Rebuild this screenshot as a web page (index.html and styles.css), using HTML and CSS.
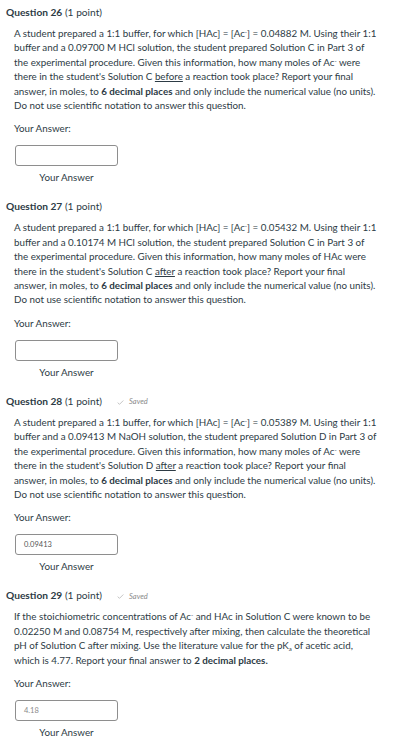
FILE: index.html
```html
<!DOCTYPE html>
<html>
<head>
<meta charset="utf-8">
<link rel="stylesheet" href="styles.css">
</head>
<body>
<div class="page">
  <section class="question">
    <div class="q-title"><b>Question 26</b> <span class="pts">(1 point)</span></div>
    <p class="q-body">A student prepared a 1:1 buffer, for which [HAc] = [Ac<sup>-</sup>] = 0.04882 M. Using their 1:1<br>buffer and a 0.09700 M HCl solution, the student prepared Solution C in Part 3 of<br>the experimental procedure. Given this information, how many moles of Ac<sup>-</sup> were<br>there in the student's Solution C <u>before</u> a reaction took place? Report your final<br>answer, in moles, to <b>6 decimal places</b> and only include the numerical value (no units).<br>Do not use scientific notation to answer this question.</p>
    <div class="answer-label">Your Answer:</div>
    <div class="answer">
      <div class="input"></div>
      <div class="input-caption">Your Answer</div>
    </div>
  </section>
  <section class="question">
    <div class="q-title"><b>Question 27</b> <span class="pts">(1 point)</span></div>
    <p class="q-body">A student prepared a 1:1 buffer, for which [HAc] = [Ac<sup>-</sup>] = 0.05432 M. Using their 1:1<br>buffer and a 0.10174 M HCl solution, the student prepared Solution C in Part 3 of<br>the experimental procedure. Given this information, how many moles of HAc were<br>there in the student's Solution C <u>after</u> a reaction took place? Report your final<br>answer, in moles, to <b>6 decimal places</b> and only include the numerical value (no units).<br>Do not use scientific notation to answer this question.</p>
    <div class="answer-label">Your Answer:</div>
    <div class="answer">
      <div class="input"></div>
      <div class="input-caption">Your Answer</div>
    </div>
  </section>
  <section class="question">
    <div class="q-title"><b>Question 28</b> <span class="pts">(1 point)</span><span class="saved"><svg class="check" viewBox="0 0 8 6" width="7" height="5"><path d="M0.6 3.2 L2.8 5.2 L7.4 0.6" fill="none" stroke="#b9b9b9" stroke-width="1"/></svg><i>Saved</i></span></div>
    <p class="q-body">A student prepared a 1:1 buffer, for which [HAc] = [Ac<sup>-</sup>] = 0.05389 M. Using their 1:1<br>buffer and a 0.09413 M NaOH solution, the student prepared Solution D in Part 3 of<br>the experimental procedure. Given this information, how many moles of Ac<sup>-</sup> were<br>there in the student's Solution D <u>after</u> a reaction took place? Report your final<br>answer, in moles, to <b>6 decimal places</b> and only include the numerical value (no units).<br>Do not use scientific notation to answer this question.</p>
    <div class="answer-label">Your Answer:</div>
    <div class="answer">
      <div class="input"><span class="value">0.09413</span></div>
      <div class="input-caption">Your Answer</div>
    </div>
  </section>
  <section class="question">
    <div class="q-title"><b>Question 29</b> <span class="pts">(1 point)</span><span class="saved"><svg class="check" viewBox="0 0 8 6" width="7" height="5"><path d="M0.6 3.2 L2.8 5.2 L7.4 0.6" fill="none" stroke="#b9b9b9" stroke-width="1"/></svg><i>Saved</i></span></div>
    <p class="q-body">If the stoichiometric concentrations of Ac<sup>-</sup> and HAc in Solution C were known to be<br>0.02250 M and 0.08754 M, respectively after mixing, then calculate the theoretical<br>pH of Solution C after mixing. Use the literature value for the pK<sub>a</sub> of acetic acid,<br>which is 4.77. Report your final answer to <b>2 decimal places.</b></p>
    <div class="answer-label">Your Answer:</div>
    <div class="answer">
      <div class="input"><span class="value light">4.18</span></div>
      <div class="input-caption">Your Answer</div>
    </div>
  </section>
</div>
</body>
</html>
```
FILE: styles.css
```css
html, body {
  margin: 0;
  padding: 0;
  background: #ffffff;
}
body {
  font-family: Lato, "Open Sans", sans-serif;
  color: #2d3b45;
  width: 402px;
  height: 750px;
  overflow: hidden;
}
.page {
  padding: 5px 6px 0 6px;
  display: flex;
  flex-direction: column;
  gap: 15px;
}
.question {
  display: flex;
  flex-direction: column;
}
.q-title {
  font-size: 10.2px;
  line-height: 14px;
  white-space: nowrap;
}
.q-title b {
  font-weight: 700;
}
.saved {
  display: inline-flex;
  align-items: center;
  vertical-align: middle;
  margin-left: 15px;
  color: #8a8a8a;
  font-size: 7.5px;
  line-height: 10px;
}
.saved .check {
  margin-right: 5px;
}
.q-body {
  margin: 7px 0 0 8px;
  font-size: 9.8px;
  line-height: 14.4px;
  white-space: nowrap;
}
.q-body b {
  font-weight: 700;
}
.q-body u {
  text-underline-offset: 1px;
}
sup {
  font-size: 6px;
  vertical-align: 3px;
  line-height: 0;
}
sub {
  font-size: 6px;
  vertical-align: -2px;
  line-height: 0;
}
.answer-label {
  margin: 9px 0 0 8px;
  font-size: 9.8px;
  line-height: 14px;
}
.answer {
  margin: 10px 0 0 9px;
  width: 103px;
  display: flex;
  flex-direction: column;
  gap: 4px;
}
.input {
  box-sizing: border-box;
  height: 21px;
  border: 1px solid #8e8e8e;
  border-radius: 3px;
  display: flex;
  align-items: center;
  padding-left: 8px;
}
.value {
  font-size: 7.5px;
  color: #555;
}
.value.light {
  color: #8a8a8a;
}
.input-caption {
  text-align: center;
  font-size: 9.8px;
  line-height: 14px;
}
```
